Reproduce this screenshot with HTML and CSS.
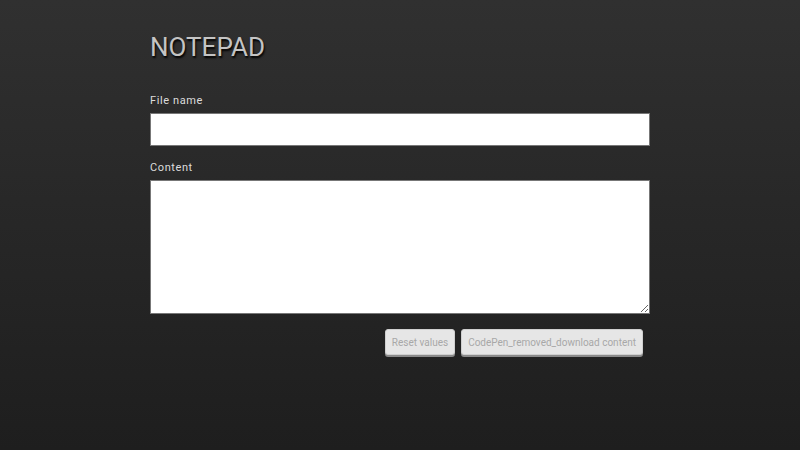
FILE: index.html
```html
<!DOCTYPE html>
<html>
<head>
<meta charset="utf-8">
<link rel="stylesheet" href="styles.css">
</head>
<body>
<div class="page">
  <h1 class="title">NOTEPAD</h1>
  <label class="label" for="fn">File name</label>
  <input class="field" id="fn" type="text">
  <label class="label label-content" for="ct">Content</label>
  <textarea class="area" id="ct"></textarea>
  <div class="actions">
    <button class="btn">Reset values</button>
    <button class="btn">CodePen_removed_download content</button>
  </div>
</div>
</body>
</html>
```
FILE: styles.css
```css
html, body {
  margin: 0;
  padding: 0;
  height: 100%;
}
body {
  background: linear-gradient(to bottom, #303030 0%, #1e1e1e 100%);
  font-family: Roboto, "Liberation Sans", sans-serif;
  overflow: hidden;
}
.page {
  width: 500px;
  margin: 0 auto;
  padding-top: 32px;
  display: flex;
  flex-direction: column;
}
.title {
  margin: 0;
  font-size: 26px;
  font-weight: 400;
  letter-spacing: 0;
  color: #c4c4c4;
  text-shadow: 1px 2px 2px #000;
  line-height: 30px;
}
.label {
  margin-top: 32px;
  font-size: 11px;
  letter-spacing: 0.6px;
  color: #dcdcdc;
  line-height: 14px;
}
.label-content {
  margin-top: 15px;
}
.field {
  margin-top: 5px;
  box-sizing: border-box;
  height: 33px;
  width: 500px;
  border: 1px solid #777;
  background: #fff;
  padding: 0 6px;
}
.area {
  margin-top: 5px;
  box-sizing: border-box;
  height: 134px;
  width: 500px;
  border: 1px solid #777;
  background: #fff;
  resize: vertical;
}
.actions {
  margin-top: 15px;
  display: flex;
  justify-content: flex-end;
  gap: 6px;
  padding-right: 7px;
}
.btn {
  font-family: Roboto, "Liberation Sans", sans-serif;
  font-size: 10px;
  color: #a8a8a8;
  background: #e6e6e6;
  border: 1px solid #cfcfcf;
  border-radius: 3px;
  height: 26px;
  padding: 0 6px;
  box-shadow: 0 2px 0 #8a8a8a;
}
```
